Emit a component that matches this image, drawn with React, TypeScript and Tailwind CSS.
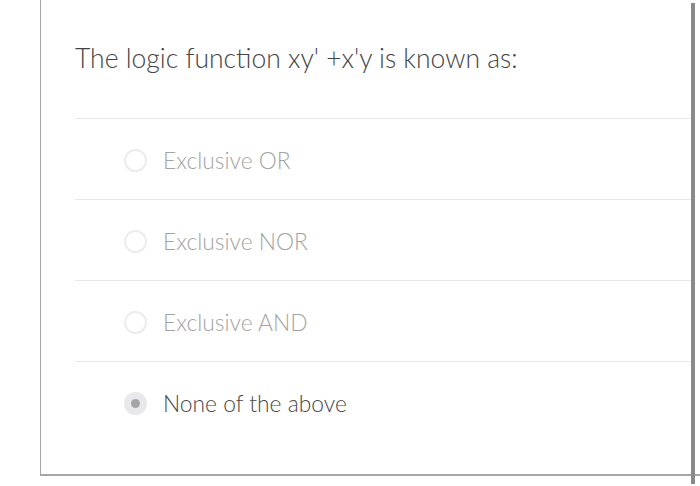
import React from 'react'

const options = [
  { label: 'Exclusive OR', selected: false },
  { label: 'Exclusive NOR', selected: false },
  { label: 'Exclusive AND', selected: false },
  { label: 'None of the above', selected: true },
]

function Radio({ selected }: { selected: boolean }) {
  if (selected) {
    return (
      <span className="flex h-[23px] w-[23px] items-center justify-center rounded-full bg-[#e9e9ec]">
        <span className="h-[9px] w-[9px] rounded-full bg-[#a4a4a9]" />
      </span>
    )
  }
  return <span className="h-[23px] w-[23px] rounded-full border-2 border-[#ececee] bg-white" />
}

export default function App() {
  return (
    <div className="relative h-[486px] w-[700px] overflow-hidden bg-white font-['Lato',sans-serif]">
      <div className="ml-[40px] h-[476px] border-b-2 border-l border-[#a6a6a6] pl-[34px] pr-[9px]">
        <h1 className="pt-[38px] text-[26.5px] font-light leading-[40px] text-[#444444]">
          The logic function xy' +x'y is known as:
        </h1>
        <div className="mt-[40px]">
          {options.map((o) => (
            <div
              key={o.label}
              className="flex h-[81px] items-center gap-[16px] border-t border-[#e8e8e8] pl-[49px] pt-[2px]"
            >
              <Radio selected={o.selected} />
              <span
                className={
                  o.selected
                    ? 'text-[22.8px] font-light text-[#474747]'
                    : 'text-[22.8px] font-light text-[#a3a3a3]'
                }
              >
                {o.label}
              </span>
            </div>
          ))}
        </div>
      </div>
      <div className="absolute left-[691px] top-[3px] h-[481px] w-[4px] bg-[#8a8a8a]" />
    </div>
  )
}
